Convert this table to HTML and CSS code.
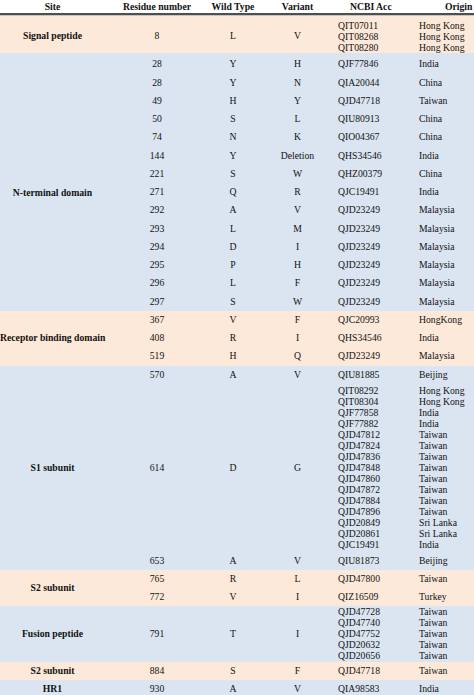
FILE: index.html
```html
<!DOCTYPE html>
<html>
<head>
<meta charset="utf-8">
<link rel="stylesheet" href="styles.css">
</head>
<body>
<table class="tbl">
  <colgroup>
    <col class="c-site"><col class="c-res"><col class="c-wt"><col class="c-var"><col class="c-acc"><col class="c-org">
  </colgroup>
  <thead>
    <tr>
      <th>Site</th><th>Residue number</th><th>Wild Type</th><th>Variant</th><th class="h-acc">NCBI Acc</th><th class="h-org">Origin</th>
    </tr>
  </thead>
  <tbody>
    <tr class="peach first sig">
      <td class="site">Signal peptide</td><td>8</td><td>L</td><td>V</td>
      <td class="acc stack"><div>QIT07011</div><div>QIT08268</div><div>QIT08280</div></td>
      <td class="org stack"><div>Hong Kong</div><div>Hong Kong</div><div>Hong Kong</div></td>
    </tr>

    <tr class="blue ntop">
      <td class="site site-low" rowspan="14">N-terminal domain</td><td>28</td><td>Y</td><td>H</td><td class="acc">QJF77846</td><td class="org">India</td>
    </tr>
    <tr class="blue"><td>28</td><td>Y</td><td>N</td><td class="acc">QIA20044</td><td class="org">China</td></tr>
    <tr class="blue"><td>49</td><td>H</td><td>Y</td><td class="acc">QJD47718</td><td class="org">Taiwan</td></tr>
    <tr class="blue"><td>50</td><td>S</td><td>L</td><td class="acc">QIU80913</td><td class="org">China</td></tr>
    <tr class="blue"><td>74</td><td>N</td><td>K</td><td class="acc">QIO04367</td><td class="org">China</td></tr>
    <tr class="blue"><td>144</td><td>Y</td><td>Deletion</td><td class="acc">QHS34546</td><td class="org">India</td></tr>
    <tr class="blue"><td>221</td><td>S</td><td>W</td><td class="acc">QHZ00379</td><td class="org">China</td></tr>
    <tr class="blue"><td>271</td><td>Q</td><td>R</td><td class="acc">QJC19491</td><td class="org">India</td></tr>
    <tr class="blue"><td>292</td><td>A</td><td>V</td><td class="acc">QJD23249</td><td class="org">Malaysia</td></tr>
    <tr class="blue"><td>293</td><td>L</td><td>M</td><td class="acc">QJD23249</td><td class="org">Malaysia</td></tr>
    <tr class="blue"><td>294</td><td>D</td><td>I</td><td class="acc">QJD23249</td><td class="org">Malaysia</td></tr>
    <tr class="blue"><td>295</td><td>P</td><td>H</td><td class="acc">QJD23249</td><td class="org">Malaysia</td></tr>
    <tr class="blue"><td>296</td><td>L</td><td>F</td><td class="acc">QJD23249</td><td class="org">Malaysia</td></tr>
    <tr class="blue"><td>297</td><td>S</td><td>W</td><td class="acc">QJD23249</td><td class="org">Malaysia</td></tr>

    <tr class="peach">
      <td class="site" rowspan="3">Receptor binding domain</td><td>367</td><td>V</td><td>F</td><td class="acc">QJC20993</td><td class="org">HongKong</td>
    </tr>
    <tr class="peach"><td>408</td><td>R</td><td>I</td><td class="acc">QHS34546</td><td class="org">India</td></tr>
    <tr class="peach"><td>519</td><td>H</td><td>Q</td><td class="acc">QJD23249</td><td class="org">Malaysia</td></tr>

    <tr class="blue">
      <td class="site" rowspan="3">S1 subunit</td><td>570</td><td>A</td><td>V</td><td class="acc">QIU81885</td><td class="org">Beijing</td>
    </tr>
    <tr class="blue s1mid">
      <td>614</td><td>D</td><td>G</td>
      <td class="acc stack">
        <div>QIT08292</div><div>QIT08304</div><div>QJF77858</div><div>QJF77882</div><div>QJD47812</div>
        <div>QJD47824</div><div>QJD47836</div><div>QJD47848</div><div>QJD47860</div><div>QJD47872</div>
        <div>QJD47884</div><div>QJD47896</div><div>QJD20849</div><div>QJD20861</div><div>QJC19491</div>
      </td>
      <td class="org stack">
        <div>Hong Kong</div><div>Hong Kong</div><div>India</div><div>India</div><div>Taiwan</div>
        <div>Taiwan</div><div>Taiwan</div><div>Taiwan</div><div>Taiwan</div><div>Taiwan</div>
        <div>Taiwan</div><div>Taiwan</div><div>Sri Lanka</div><div>Sri Lanka</div><div>India</div>
      </td>
    </tr>
    <tr class="blue"><td>653</td><td>A</td><td>V</td><td class="acc">QIU81873</td><td class="org">Beijing</td></tr>

    <tr class="peach">
      <td class="site" rowspan="2">S2 subunit</td><td>765</td><td>R</td><td>L</td><td class="acc">QJD47800</td><td class="org">Taiwan</td>
    </tr>
    <tr class="peach"><td>772</td><td>V</td><td>I</td><td class="acc">QIZ16509</td><td class="org">Turkey</td></tr>

    <tr class="blue">
      <td class="site">Fusion peptide</td><td>791</td><td>T</td><td>I</td>
      <td class="acc stack"><div>QJD47728</div><div>QJD47740</div><div>QJD47752</div><div>QJD20632</div><div>QJD20656</div></td>
      <td class="org stack"><div>Taiwan</div><div>Taiwan</div><div>Taiwan</div><div>Taiwan</div><div>Taiwan</div></td>
    </tr>

    <tr class="peach">
      <td class="site">S2 subunit</td><td>884</td><td>S</td><td>F</td><td class="acc">QJD47718</td><td class="org">Taiwan</td>
    </tr>

    <tr class="blue">
      <td class="site">HR1</td><td>930</td><td>A</td><td>V</td><td class="acc">QIA98583</td><td class="org">India</td>
    </tr>
  </tbody>
</table>
</body>
</html>
```

FILE: styles.css
```css
html, body {
  margin: 0;
  padding: 0;
  background: #ffffff;
  width: 474px;
  height: 695px;
  overflow: hidden;
}

.tbl {
  border-collapse: separate;
  border-spacing: 0;
  table-layout: fixed;
  width: 474px;
  font-family: "Liberation Serif", "Times New Roman", serif;
  font-size: 9.7px;
  color: #111111;
}

.c-site { width: 105px; }
.c-res { width: 104px; }
.c-wt { width: 48px; }
.c-var { width: 81px; }
.c-acc { width: 74px; }
.c-org { width: 62px; }

.tbl th {
  font-weight: bold;
  height: 13px;
  line-height: 13px;
  padding: 0;
  border-bottom: 2px solid #4f4f4f;
  background: #ffffff;
  text-align: center;
  white-space: nowrap;
}

.tbl th.h-acc {
  text-align: left;
  text-indent: 12px;
}

.tbl th.h-org {
  text-align: left;
  text-indent: 33px;
}

.tbl td {
  padding: 0;
  line-height: 18.25px;
  text-align: center;
  vertical-align: middle;
  white-space: nowrap;
}

.first td {
  border-top: 1px solid #c4c4c4;
}

.peach td { background: #fde9d9; }
.blue td { background: #dbe5f1; }

.tbl td.site { font-weight: bold; }

.tbl td.acc { text-align: left; }
.tbl td.org { text-align: left; text-indent: 7px; }

.stack div { line-height: 11.05px; }

.sig td { padding-top: 3.5px; }

.ntop td { padding-top: 2.7px; }
.ntop td.site-low { padding-top: 22px; }

.s1mid td { padding-top: 1px; padding-bottom: 1px; }
```
